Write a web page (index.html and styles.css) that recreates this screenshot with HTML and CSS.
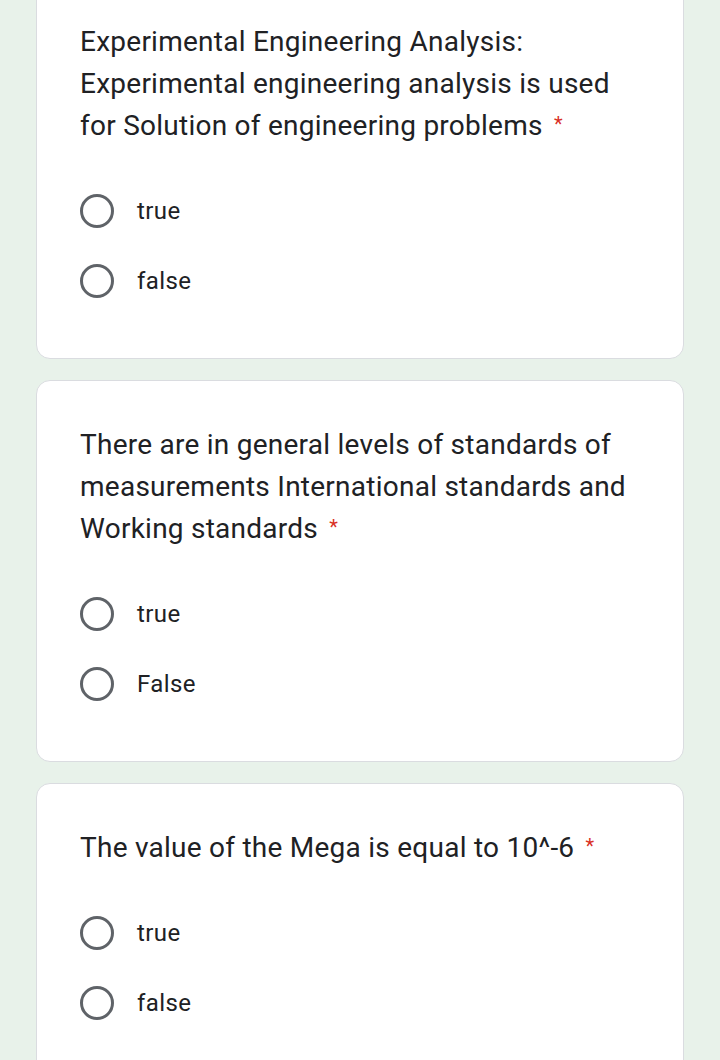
FILE: index.html
```html
<!DOCTYPE html>
<html>
<head>
<meta charset="utf-8">
<link rel="stylesheet" href="styles.css">
</head>
<body>
<div class="page">
  <div class="card">
    <div class="question">Experimental Engineering Analysis: Experimental engineering analysis is used for Solution of engineering problems <span class="req">*</span></div>
    <div class="options">
      <div class="option"><span class="radio"></span><span class="label">true</span></div>
      <div class="option"><span class="radio"></span><span class="label">false</span></div>
    </div>
  </div>
  <div class="card">
    <div class="question">There are in general levels of standards of measurements International standards and Working standards <span class="req">*</span></div>
    <div class="options">
      <div class="option"><span class="radio"></span><span class="label">true</span></div>
      <div class="option"><span class="radio"></span><span class="label">False</span></div>
    </div>
  </div>
  <div class="card">
    <div class="question">The value of the Mega is equal to 10^-6 <span class="req">*</span></div>
    <div class="options">
      <div class="option"><span class="radio"></span><span class="label">true</span></div>
      <div class="option"><span class="radio"></span><span class="label">false</span></div>
    </div>
  </div>
</div>
</body>
</html>
```
FILE: styles.css
```css
html, body {
  margin: 0;
  padding: 0;
  background: #e8f2ea;
  height: 100%;
  overflow: hidden;
}
body {
  font-family: Roboto, "Liberation Sans", sans-serif;
  color: #202124;
}
.page {
  margin-top: -23px;
  padding: 0 36px;
  display: flex;
  flex-direction: column;
  gap: 21px;
}
.card {
  background: #fff;
  border: 1px solid #dadce0;
  border-radius: 14px;
  padding: 43px 43px 42px 43px;
}
.question {
  font-size: 28px;
  line-height: 42px;
  letter-spacing: 0.25px;
}
.req {
  color: #d93025;
  font-size: 20px;
  line-height: 0;
  vertical-align: 4px;
  margin-left: 4px;
}
.options {
  margin-top: 29px;
  display: flex;
  flex-direction: column;
}
.option {
  height: 70px;
  display: flex;
  align-items: center;
  gap: 23px;
}
.radio {
  box-sizing: border-box;
  width: 34px;
  height: 34px;
  border: 3px solid #5f6368;
  border-radius: 50%;
  flex: none;
}
.label {
  font-size: 24px;
  letter-spacing: 0.4px;
}
```
